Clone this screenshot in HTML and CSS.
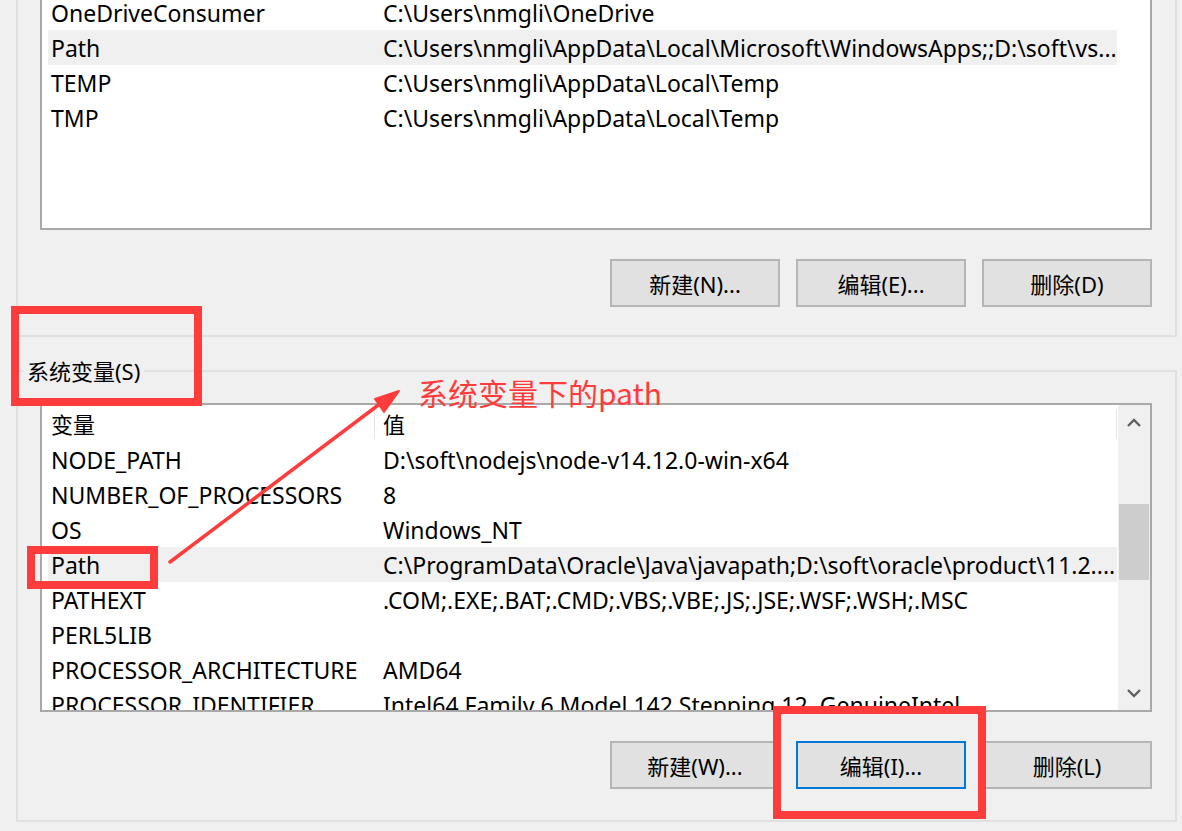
FILE: index.html
```html
<!DOCTYPE html>
<html lang="zh-CN">
<head>
    <meta charset="UTF-8">
    <meta name="viewport" content="width=device-width, initial-scale=1.0">
    <title>环境变量</title>
    <link rel="stylesheet" href="styles.css">
</head>
<body>
    <div class="dialog">
        <!-- user variables (scrolled, top cut off) -->
        <div class="group group-user">
            <div class="list list-user">
                <div class="list-body">
                    <div class="row"><span class="name">OneDriveConsumer</span><span class="value">C:\Users\nmgli\OneDrive</span></div>
                    <div class="row selected"><span class="name">Path</span><span class="value">C:\Users\nmgli\AppData\Local\Microsoft\WindowsApps;;D:\soft\vs...</span></div>
                    <div class="row"><span class="name">TEMP</span><span class="value">C:\Users\nmgli\AppData\Local\Temp</span></div>
                    <div class="row"><span class="name">TMP</span><span class="value">C:\Users\nmgli\AppData\Local\Temp</span></div>
                </div>
            </div>
            <div class="buttons">
                <button class="btn">新建(N)...</button>
                <button class="btn">编辑(E)...</button>
                <button class="btn">删除(D)</button>
            </div>
        </div>

        <!-- system variables -->
        <div class="group group-system">
            <div class="group-title">系统变量(S)</div>
            <div class="list list-system">
                <div class="list-body">
                    <div class="row header"><span class="name">变量</span><span class="value">值</span></div>
                    <div class="row"><span class="name">NODE_PATH</span><span class="value">D:\soft\nodejs\node-v14.12.0-win-x64</span></div>
                    <div class="row"><span class="name">NUMBER_OF_PROCESSORS</span><span class="value">8</span></div>
                    <div class="row"><span class="name">OS</span><span class="value">Windows_NT</span></div>
                    <div class="row selected"><span class="name">Path</span><span class="value">C:\ProgramData\Oracle\Java\javapath;D:\soft\oracle\product\11.2....</span></div>
                    <div class="row"><span class="name">PATHEXT</span><span class="value">.COM;.EXE;.BAT;.CMD;.VBS;.VBE;.JS;.JSE;.WSF;.WSH;.MSC</span></div>
                    <div class="row"><span class="name">PERL5LIB</span><span class="value"></span></div>
                    <div class="row"><span class="name">PROCESSOR_ARCHITECTURE</span><span class="value">AMD64</span></div>
                    <div class="row"><span class="name">PROCESSOR_IDENTIFIER</span><span class="value">Intel64 Family 6 Model 142 Stepping 12, GenuineIntel</span></div>
                </div>
                <div class="scrollbar">
                    <div class="sb-arrow">
                        <svg width="16" height="10" viewBox="0 0 16 10"><path d="M2 8 L8 2 L14 8" fill="none" stroke="#606060" stroke-width="2.4"/></svg>
                    </div>
                    <div class="sb-track"><div class="sb-thumb"></div></div>
                    <div class="sb-arrow">
                        <svg width="16" height="10" viewBox="0 0 16 10"><path d="M2 2 L8 8 L14 2" fill="none" stroke="#606060" stroke-width="2.4"/></svg>
                    </div>
                </div>
            </div>
            <div class="buttons">
                <button class="btn">新建(W)...</button>
                <button class="btn focused">编辑(I)...</button>
                <button class="btn">删除(L)</button>
            </div>
        </div>
    </div>

    <!-- red markup drawn over the screenshot -->
    <svg class="markup" width="1182" height="831" viewBox="0 0 1182 831">
        <rect x="15" y="310" width="183" height="92" fill="none" stroke="#ff3c3c" stroke-width="8"/>
        <rect x="31" y="550" width="123" height="35" fill="none" stroke="#ff3c3c" stroke-width="8"/>
        <rect x="777" y="710" width="205" height="105" fill="none" stroke="#ff3c3c" stroke-width="8"/>
        <path d="M170 562 L381 403" stroke="#ff3c3c" stroke-width="3.5" stroke-linecap="round"/>
        <path d="M399 391 L384 412 L375 399 Z" fill="#ff3c3c" stroke="#ff3c3c" stroke-width="2" stroke-linejoin="round"/>
    </svg>
    <div class="note">系统变量下的path</div>
</body>
</html>
```

FILE: styles.css
```css
body {
    margin: 0;
    width: 1182px;
    height: 831px;
    overflow: hidden;
    position: relative;
    background: #f0f0f0;
    color: #000000;
    font-family: "Noto Sans", "Noto Sans CJK SC", sans-serif;
    font-size: 23px;
}
.dialog {
    padding-left: 16px;
}
.group {
    width: 1161px;
    box-sizing: border-box;
    border: 2px solid #e0e0e0;
    padding: 0 23px 28px 22px;
}
.group-user {
    margin-top: -40px;
    padding-top: 18px;
}
.group-system {
    margin-top: 33px;
    padding-bottom: 31px;
}
.group-title {
    width: fit-content;
    margin: -15px 0 0 -17px;
    padding: 0 4px;
    background: #f0f0f0;
    font-size: 22px;
    line-height: 28px;
}

/* list views */
.list {
    display: flex;
    box-sizing: border-box;
    border: 2px solid #a9a9a9;
    background: #ffffff;
    padding-left: 6px;
    overflow: hidden;
}
.list-user {
    height: 250px;
    padding-top: 13px;
}
.list-system {
    height: 309px;
    margin-top: 18px;
}
.list-body {
    flex: 1;
    overflow: hidden;
}
.row {
    display: flex;
    align-items: center;
    width: 1069px;
    height: 35px;
    white-space: nowrap;
}
.row.selected {
    background: #f0f0f0;
}
.row .name {
    width: 327px;
    padding-left: 3px;
    box-sizing: border-box;
    overflow: hidden;
}
.row .value {
    width: 742px;
    padding-left: 8px;
    box-sizing: border-box;
    overflow: hidden;
}
.row.header {
    height: 37px;
}
.row.header span {
    height: 30px;
    line-height: 30px;
    border-right: 1px solid #e5e5e5;
    font-size: 22px;
}

/* scrollbar */
.scrollbar {
    width: 32px;
    display: flex;
    flex-direction: column;
    background: #f0f0f0;
}
.sb-arrow {
    height: 35px;
    display: flex;
    align-items: center;
    justify-content: center;
}
.sb-track {
    flex: 1;
    padding: 64px 1px 0 1px;
}
.sb-thumb {
    height: 76px;
    background: #cdcdcd;
}

/* buttons */
.buttons {
    display: flex;
    justify-content: flex-end;
    gap: 16px;
    margin-top: 29px;
}
.btn {
    width: 170px;
    height: 48px;
    background: #e1e1e1;
    border: 2px solid #b5b5b5;
    font-family: "Noto Sans", "Noto Sans CJK SC", sans-serif;
    font-size: 22px;
    color: #000000;
    padding: 0;
}
.btn.focused {
    border-color: #0078d7;
}

/* annotations over the screenshot */
.markup {
    position: absolute;
    left: 0;
    top: 0;
    pointer-events: none;
}
.note {
    position: absolute;
    left: 418px;
    top: 372px;
    color: #ff3c3c;
    font-family: "Noto Sans CJK SC", sans-serif;
    font-size: 30px;
    line-height: 40px;
}
```
